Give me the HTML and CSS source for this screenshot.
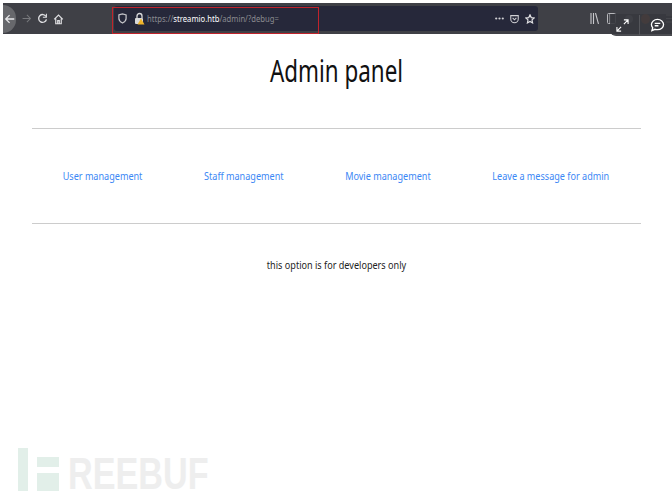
FILE: index.html
```html
<!DOCTYPE html>
<html lang="en">
    <head>
        <meta charset="UTF-8">
        <meta name="viewport" content="width=device-width, initial-scale=1.0">
        <link rel="stylesheet" href="styles.css">
        <title>Admin panel</title>
    </head>
    <body>
        <div class="toolbar">
            <div class="nav-buttons">
                <div class="back-button">
                    <svg width="12" height="12" viewBox="0 0 14 14" fill="none" stroke="#e8e8ea" stroke-width="1.5"><path d="M12 7H2M6.500 2.500L2 7l4.500 4.500"/></svg>
                </div>
                <svg width="11" height="11" viewBox="0 0 14 14" fill="none" stroke="#77787c" stroke-width="1.3"><path d="M2 7h10M7.500 2.500L12 7l-4.500 4.500"/></svg>
                <svg width="11" height="11" viewBox="0 0 14 14" fill="none" stroke="#e0e0e3" stroke-width="1.700"><path d="M11.500 4.500A5 5 0 1 0 12 8"/><path d="M12 1v4.500H7.500" stroke-width="1.300"/></svg>
                <svg width="11" height="12" viewBox="0 0 14 14" fill="none" stroke="#e0e0e3" stroke-width="1.500"><path d="M1.500 7.500L7 2l5.500 5.500M3.500 6.500V13h7V6.500M6 13V9h2v4"/></svg>
            </div>
            <div class="urlbar">
                <svg class="shield" width="9" height="11" viewBox="0 0 10 12" fill="none" stroke="#c4c4c8" stroke-width="1.400"><path d="M1 2l4-1 4 1v4c0 2.500-2 4-4 5-2-1-4-2.500-4-5z"/></svg>
                <svg class="lock" width="11" height="13" viewBox="0 0 11 13"><path d="M3 6V4a2.500 2.500 0 0 1 5 0v2" fill="none" stroke="#d8d8da" stroke-width="1.300"/><rect x="1" y="6" width="8" height="6" rx="1" fill="#d8d8da"/><path d="M7 6.500l3.500 6h-7z" fill="#f0b429"/></svg>
                <span class="url"><span class="url-dim">https://</span>streamio.htb<span class="url-dim">/admin/?debug=</span></span>
                <div class="urlbar-end">
                    <svg width="9" height="3" viewBox="0 0 9 3" fill="#d0d0d4"><circle cx="1.200" cy="1.500" r="1.100"/><circle cx="4.500" cy="1.500" r="1.100"/><circle cx="7.800" cy="1.500" r="1.100"/></svg>
                    <svg width="9" height="10" viewBox="0 0 12 12" fill="none" stroke="#d0d0d4" stroke-width="1.400"><path d="M1 1.500h10V6a5 5 0 0 1-10 0z"/><path d="M3.500 4.500L6 7l2.500-2.500"/></svg>
                    <svg width="10" height="10" viewBox="0 0 12 12" fill="none" stroke="#e0e0e3" stroke-width="1.400"><path d="M6 1l1.500 3.300 3.500.4-2.600 2.400.7 3.600L6 8.900l-3.100 1.800.7-3.600L1 4.700l3.500-.4z"/></svg>
                </div>
            </div>
            <div class="tools">
                <svg width="9" height="11" viewBox="0 0 9 11" fill="none" stroke="#c8c8cc" stroke-width="1.100"><path d="M1 0v11M3.500 0v11M5.500 0L8.500 11"/></svg>
                <svg class="tool-side" width="9" height="11" viewBox="0 0 9 11" fill="none" stroke="#b8b8bc" stroke-width="1"><rect x=".5" y=".5" width="8" height="10" rx="1"/><path d="M3 .5v10"/></svg>
                <div class="tool-circle"></div>
                <div class="tool-fox"></div>
                <svg class="tool-menu" width="7" height="9" viewBox="0 0 7 9" fill="none" stroke="#c8c8cc" stroke-width="1"><path d="M0 1h7M0 4.500h7M0 8h7"/></svg>
            </div>
        </div>

        <div class="red-box"></div>

        <div class="float-pill">
            <svg width="13" height="13" viewBox="0 0 14 14" fill="none" stroke="#fff" stroke-width="1.200"><path d="M8.500 1H13v4.500M13 1L8.500 5.500M5.500 13H1V8.500M1 13l4.500-4.500"/></svg>
            <div class="pill-line"></div>
            <svg width="15" height="14" viewBox="0 0 16 15" fill="none" stroke="#fff" stroke-width="1.400"><path d="M8 1.500c3.600 0 6.500 2.400 6.500 5.500S11.600 12.500 8 12.500c-.9 0-1.800-.2-2.600-.4L2 13.500l.9-3C2 9.500 1.500 8.300 1.500 7 1.500 3.900 4.400 1.500 8 1.500z"/><path d="M5 5.700h6M5 8.300h4"/></svg>
        </div>

        <main class="content">
            <h1 class="titleFont">Admin panel</h1>
            <hr class="divider">
            <div class="link-row">
                <div class="link-list">
                    <a href="#">User management</a>
                    <a href="#">Staff management</a>
                    <a href="#">Movie management</a>
                    <a href="#">Leave a message for admin</a>
                </div>
            </div>
            <hr class="divider">
            <p class="message">this option is for developers only</p>
        </main>

        <div class="watermark">
            <svg width="41" height="43" viewBox="0 0 41 43"><path d="M0 0h10v43H0zM19 9h22v10H19zM19 25h22v18H19z" fill="#e2efe9"/></svg>
            <span class="watermark-text">REEBUF</span>
        </div>
    </body>
</html>
```
FILE: styles.css
```css
body {
    margin: 0;
    height: 498px;
    overflow: hidden;
    position: relative;
    background: #fff;
    font-family: "Noto Sans", sans-serif;
}

.toolbar {
    display: flex;
    align-items: center;
    height: 31px;
    margin: 3px 0 0 3px;
    background: #3f4046;
}

.nav-buttons {
    display: flex;
    align-items: center;
    gap: 5px;
    width: 111px;
    flex-shrink: 0;
}

.back-button {
    display: flex;
    align-items: center;
    justify-content: center;
    width: 13px;
    height: 28px;
    border-radius: 0 14px 14px 0;
    background: #67686c;
}

.urlbar {
    display: flex;
    align-items: center;
    width: 424px;
    height: 25px;
    flex-shrink: 0;
    border-radius: 3px;
    background: #26283a;
    box-sizing: border-box;
    padding: 0 3px 0 4px;
    font-size: 9px;
    color: #fff;
}

.shield {
    margin-right: 7px;
}

.lock {
    margin-right: 2px;
}

.url {
    white-space: nowrap;
    transform: scaleX(0.85);
    transform-origin: left center;
}

.url-dim {
    color: #8a8b90;
}

.urlbar-end {
    display: flex;
    align-items: center;
    gap: 6px;
    margin-left: auto;
}

.tools {
    display: flex;
    align-items: center;
    margin-left: 52px;
}

.tool-side {
    margin-left: 8px;
}

.tool-circle {
    width: 8px;
    height: 8px;
    margin-left: 9px;
    border-radius: 50%;
    background: #85868a;
}

.tool-fox {
    width: 9px;
    height: 10px;
    margin-left: 8px;
    border-radius: 50%;
    background: #a8572f;
}

.tool-menu {
    margin-left: 16px;
}

.red-box {
    position: absolute;
    left: 112px;
    top: 7px;
    width: 205px;
    height: 25px;
    border: 1px solid #c0232b;
}

.float-pill {
    position: absolute;
    left: 610px;
    top: 14px;
    width: 62px;
    height: 22px;
    display: flex;
    align-items: center;
    gap: 10px;
    padding-left: 6px;
    box-sizing: border-box;
    border-radius: 0 0 0 6px;
    background: rgba(55, 56, 62, 0.9);
}

.pill-line {
    width: 1px;
    height: 20px;
    background: #55565b;
}

.content {
    margin: 0 31px 0 32px;
    text-align: center;
}

.titleFont {
    margin: 0;
    padding-top: 15px;
    height: 79px;
    font-size: 30px;
    font-weight: normal;
    line-height: 44px;
    color: #111;
    transform: scaleX(0.747);
}

.divider {
    margin: 0;
    border: none;
    border-top: 1px solid #ccc;
}

.link-row {
    display: flex;
    justify-content: center;
    align-items: center;
    box-sizing: border-box;
    height: 94px;
    padding: 0 2px 2px 0;
    font-size: 11.500px;
}

.link-list {
    display: flex;
    flex-shrink: 0;
    gap: 78px;
    transform: scaleX(0.79);
}

.link-list a {
    color: #3b87f5;
    text-decoration: none;
    white-space: nowrap;
}

.message {
    margin: 32px 0 0;
    font-size: 11.500px;
    line-height: 18px;
    color: #222;
    transform: scaleX(0.79);
}

.watermark {
    position: absolute;
    left: 18px;
    top: 448px;
    display: flex;
    align-items: flex-start;
    gap: 9px;
}

.watermark-text {
    margin-top: 3px;
    font-family: "Liberation Sans", sans-serif;
    font-size: 45px;
    font-weight: bold;
    line-height: 45px;
    color: #eeeeee;
    transform: scaleX(0.76);
    transform-origin: left center;
}
```
